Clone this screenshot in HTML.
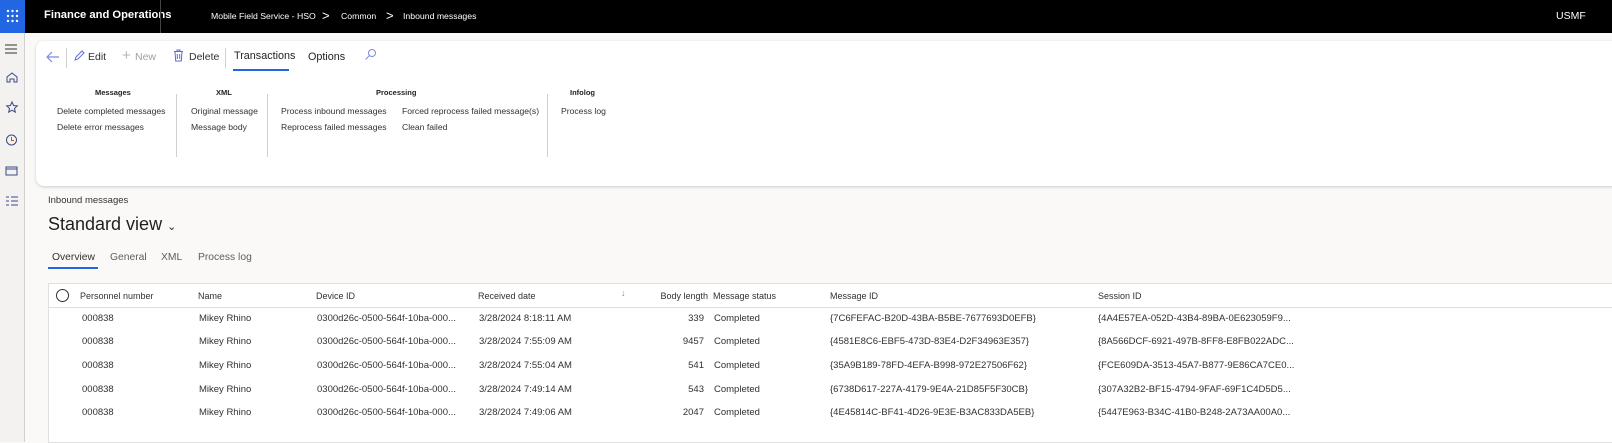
<!DOCTYPE html><html><head><style>
*{margin:0;padding:0;box-sizing:border-box}
body{width:1612px;height:442px;overflow:hidden;background:#faf9f8;font-family:"Liberation Sans",sans-serif;color:#323130;position:relative}
.a{position:absolute;white-space:nowrap}
.top{position:absolute;left:0;top:0;width:1612px;height:33px;background:#000}
.waffle{position:absolute;left:0;top:0;width:25px;height:33px;background:#2266e3}
.side{position:absolute;left:0;top:33px;width:25px;height:409px;background:#f3f2f1;border-right:1px solid #d2d0ce}
.card{position:absolute;left:36px;top:41px;width:1600px;height:145px;background:#fff;border-radius:8px;box-shadow:0 1px 3px rgba(0,0,0,.18)}
.s{font-size:8.6px;color:#323130}
.h{font-size:7.5px;font-weight:bold;color:#201f1e}
.vl{position:absolute;width:1px;background:#d2d0ce}
.grid{position:absolute;left:48px;top:283px;width:1570px;height:160px;background:#fff;border:1px solid #e1dfdd}
.gh{font-size:9px;color:#323130}
.gc{font-size:9.5px;color:#323130}
</style></head><body>
<div class="top"></div>
<div class="waffle"><svg width="25" height="33"><g fill="#fff"><circle cx="8" cy="11" r="1.2"/><circle cx="12.5" cy="11" r="1.2"/><circle cx="17" cy="11" r="1.2"/><circle cx="8" cy="16" r="1.2"/><circle cx="12.5" cy="16" r="1.2"/><circle cx="17" cy="16" r="1.2"/><circle cx="8" cy="21" r="1.2"/><circle cx="12.5" cy="21" r="1.2"/><circle cx="17" cy="21" r="1.2"/></g></svg></div>
<div class="a" style="left:44px;top:9px;color:#fff;font-size:11.2px;font-weight:bold">Finance and Operations</div>
<div class="a" style="left:160px;top:0;width:1px;height:33px;background:#444"></div>
<div class="a" style="left:211px;top:11px;color:#fff;font-size:8.7px">Mobile Field Service - HSO</div>
<div class="a" style="left:322px;top:8px;color:#fff;font-size:13px">&gt;</div>
<div class="a" style="left:341px;top:11px;color:#fff;font-size:8.7px">Common</div>
<div class="a" style="left:386px;top:8px;color:#fff;font-size:13px">&gt;</div>
<div class="a" style="left:403px;top:11px;color:#fff;font-size:8.7px">Inbound messages</div>
<div class="a" style="left:1556px;top:10px;color:#fff;font-size:10.5px">USMF</div>
<div class="side">
<svg width="25" height="200" style="position:absolute;left:0;top:0" fill="none" stroke="#323130" stroke-width="1">
<path d="M5 12h12M5 16h12M5 20h12"/>
<path d="M7 49v-5l5-4 5 4v5h-3v-3h-4v3z" stroke="#3b4a80"/>
<path d="M12 69l1.6 3.5 3.7.4-2.8 2.5.8 3.7-3.3-1.9-3.3 1.9.8-3.7-2.8-2.5 3.7-.4z" stroke="#3b4a80"/>
<circle cx="11.5" cy="107" r="5" stroke="#3b4a80"/><path d="M11.5 104v3.5h2.5" stroke="#c05a00"/>
<rect x="6" y="134" width="11" height="8" stroke="#3b4a80"/><path d="M6 136h11" stroke="#3b4a80"/>
<path d="M6 164h3M6 168h3M6 172h3M11 164h7M11 168h7M11 172h7" stroke="#3b4a80"/>
</svg></div>
<div class="card">
<svg class="a" style="left:9px;top:9px" width="16" height="14"><path d="M14 7H3M7 2L2 7l5 5" stroke="#7b8be0" stroke-width="1.2" fill="none"/></svg>
<div class="vl" style="left:30px;top:7px;height:20px"></div>
<svg class="a" style="left:37px;top:9px" width="12" height="12"><path d="M2 10l1-3 6-6 2 2-6 6z" stroke="#5c6bd0" fill="none"/></svg>
<div class="a" style="left:52px;top:10px;font-size:10.5px">Edit</div>
<div class="a" style="left:86px;top:6px;font-size:15px;color:#b5b3b1">+</div>
<div class="a" style="left:99px;top:10px;font-size:10.5px;color:#a19f9d">New</div>
<svg class="a" style="left:137px;top:8px" width="11" height="13"><path d="M1 2.5h9M4 2.5V1h3v1.5M2 2.5l.7 9.5h5.6l.7-9.5M4.3 5v5M6.7 5v5" stroke="#5c6bd0" fill="none"/></svg>
<div class="a" style="left:153px;top:10px;font-size:10.5px">Delete</div>
<div class="vl" style="left:189px;top:7px;height:20px"></div>
<div class="a" style="left:198px;top:9px;font-size:10.8px;color:#201f1e">Transactions</div>
<div class="a" style="left:197px;top:28px;width:56px;height:2px;background:#2266e3"></div>
<div class="a" style="left:272px;top:10px;font-size:10.8px;color:#201f1e">Options</div>
<svg class="a" style="left:328px;top:7px" width="13" height="13"><circle cx="8" cy="5" r="3.5" stroke="#7b8be0" fill="none"/><path d="M5.5 7.5L1.5 11.5" stroke="#7b8be0"/></svg>
<div class="a h" style="left:59px;top:47px">Messages</div>
<div class="a s" style="left:21px;top:65px">Delete completed messages</div>
<div class="a s" style="left:21px;top:81px">Delete error messages</div>
<div class="vl" style="left:140px;top:53px;height:63px"></div>
<div class="a h" style="left:180px;top:47px">XML</div>
<div class="a s" style="left:155px;top:65px">Original message</div>
<div class="a s" style="left:155px;top:81px">Message body</div>
<div class="vl" style="left:231px;top:53px;height:63px"></div>
<div class="a h" style="left:340px;top:47px">Processing</div>
<div class="a s" style="left:245px;top:65px">Process inbound messages</div>
<div class="a s" style="left:245px;top:81px">Reprocess failed messages</div>
<div class="a s" style="left:366px;top:65px">Forced reprocess failed message(s)</div>
<div class="a s" style="left:366px;top:81px">Clean failed</div>
<div class="vl" style="left:511px;top:53px;height:63px"></div>
<div class="a h" style="left:534px;top:47px">Infolog</div>
<div class="a s" style="left:525px;top:65px">Process log</div>
</div>
<div class="a" style="left:48px;top:195px;font-size:9.5px">Inbound messages</div>
<div class="a" style="left:48px;top:214px;font-size:18px;color:#201f1e">Standard view <span style="font-size:11px">&#8964;</span></div>
<div class="a" style="left:52px;top:252px;font-size:10.3px">Overview</div>
<div class="a" style="left:48px;top:267px;width:50px;height:2px;background:#2266e3"></div>
<div class="a" style="left:110px;top:252px;font-size:10.3px;color:#605e5c">General</div>
<div class="a" style="left:161px;top:252px;font-size:10.3px;color:#605e5c">XML</div>
<div class="a" style="left:198px;top:252px;font-size:10.3px;color:#605e5c">Process log</div>
<div class="grid">
<div class="a" style="left:0;top:23px;width:1570px;height:1px;background:#e1dfdd"></div>
<div class="a" style="left:7px;top:5px;width:13px;height:13px;border:1px solid #323130;border-radius:50%"></div>
<div class="a gh" style="left:31px;top:7px">Personnel number</div>
<div class="a gh" style="left:149px;top:7px">Name</div>
<div class="a gh" style="left:267px;top:7px">Device ID</div>
<div class="a gh" style="left:429px;top:7px">Received date</div>
<div class="a gh" style="left:572px;top:4px;color:#8a8886">&#8595;</div>
<div class="a gh" style="left:580px;top:7px;width:79px;text-align:right">Body length</div>
<div class="a gh" style="left:664px;top:7px">Message status</div>
<div class="a gh" style="left:781px;top:7px">Message ID</div>
<div class="a gh" style="left:1049px;top:7px">Session ID</div>
</div>
<div style="position:absolute;left:49px;top:307px">
<div class="a gc" style="top:6px;left:33px">000838</div><div class="a gc" style="top:6px;left:150px">Mikey Rhino</div><div class="a gc" style="top:6px;left:268px">0300d26c-0500-564f-10ba-000...</div><div class="a gc" style="top:6px;left:430px">3/28/2024 8:18:11 AM</div><div class="a gc" style="top:6px;left:580px;width:75px;text-align:right">339</div><div class="a gc" style="top:6px;left:665px">Completed</div><div class="a gc" style="top:6px;left:781px">{7C6FEFAC-B20D-43BA-B5BE-7677693D0EFB}</div><div class="a gc" style="top:6px;left:1049px">{4A4E57EA-052D-43B4-89BA-0E623059F9...</div>
<div class="a gc" style="top:29px;left:33px">000838</div><div class="a gc" style="top:29px;left:150px">Mikey Rhino</div><div class="a gc" style="top:29px;left:268px">0300d26c-0500-564f-10ba-000...</div><div class="a gc" style="top:29px;left:430px">3/28/2024 7:55:09 AM</div><div class="a gc" style="top:29px;left:580px;width:75px;text-align:right">9457</div><div class="a gc" style="top:29px;left:665px">Completed</div><div class="a gc" style="top:29px;left:781px">{4581E8C6-EBF5-473D-83E4-D2F34963E357}</div><div class="a gc" style="top:29px;left:1049px">{8A566DCF-6921-497B-8FF8-E8FB022ADC...</div>
<div class="a gc" style="top:53px;left:33px">000838</div><div class="a gc" style="top:53px;left:150px">Mikey Rhino</div><div class="a gc" style="top:53px;left:268px">0300d26c-0500-564f-10ba-000...</div><div class="a gc" style="top:53px;left:430px">3/28/2024 7:55:04 AM</div><div class="a gc" style="top:53px;left:580px;width:75px;text-align:right">541</div><div class="a gc" style="top:53px;left:665px">Completed</div><div class="a gc" style="top:53px;left:781px">{35A9B189-78FD-4EFA-B998-972E27506F62}</div><div class="a gc" style="top:53px;left:1049px">{FCE609DA-3513-45A7-B877-9E86CA7CE0...</div>
<div class="a gc" style="top:77px;left:33px">000838</div><div class="a gc" style="top:77px;left:150px">Mikey Rhino</div><div class="a gc" style="top:77px;left:268px">0300d26c-0500-564f-10ba-000...</div><div class="a gc" style="top:77px;left:430px">3/28/2024 7:49:14 AM</div><div class="a gc" style="top:77px;left:580px;width:75px;text-align:right">543</div><div class="a gc" style="top:77px;left:665px">Completed</div><div class="a gc" style="top:77px;left:781px">{6738D617-227A-4179-9E4A-21D85F5F30CB}</div><div class="a gc" style="top:77px;left:1049px">{307A32B2-BF15-4794-9FAF-69F1C4D5D5...</div>
<div class="a gc" style="top:100px;left:33px">000838</div><div class="a gc" style="top:100px;left:150px">Mikey Rhino</div><div class="a gc" style="top:100px;left:268px">0300d26c-0500-564f-10ba-000...</div><div class="a gc" style="top:100px;left:430px">3/28/2024 7:49:06 AM</div><div class="a gc" style="top:100px;left:580px;width:75px;text-align:right">2047</div><div class="a gc" style="top:100px;left:665px">Completed</div><div class="a gc" style="top:100px;left:781px">{4E45814C-BF41-4D26-9E3E-B3AC833DA5EB}</div><div class="a gc" style="top:100px;left:1049px">{5447E963-B34C-41B0-B248-2A73AA00A0...</div>
</div>
</body></html>
